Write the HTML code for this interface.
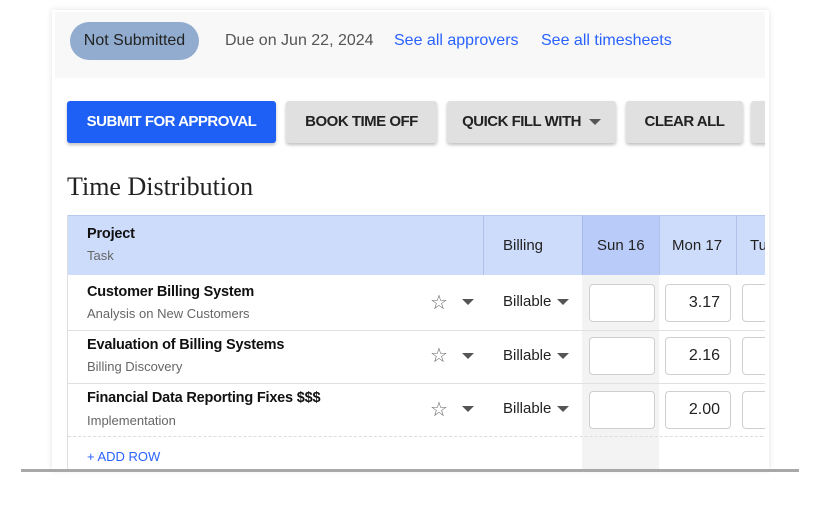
<!DOCTYPE html>
<html><head><style>
*{box-sizing:border-box;margin:0;padding:0}
body{width:818px;height:517px;background:#fff;font-family:"Liberation Sans",Arial,sans-serif;position:relative;overflow:hidden}
.card{position:absolute;left:52px;top:10px;width:717px;height:460px;background:#fff;box-shadow:0 0 6px rgba(0,0,0,.12);overflow:hidden}
.band{position:absolute;left:3px;top:2px;width:710px;height:66px;background:#f8f8f8}
.pill{position:absolute;left:15px;top:10px;width:129px;height:38px;border-radius:19px;background:#91acce;color:#222;font-size:16px;line-height:38px;text-align:center}
.t{position:absolute;font-size:16px;top:20px}
.btn{position:absolute;top:91px;height:42px;border-radius:3px;background:#e0e0e0;box-shadow:0 2px 3px rgba(0,0,0,.25);font-size:15px;font-weight:bold;letter-spacing:-0.5px;color:#222;line-height:42px;text-align:center}
h2{position:absolute;left:15px;top:162px;font-family:"Liberation Serif",serif;font-weight:normal;font-size:26px;color:#222}
.abs{position:absolute}
.hdr{position:absolute;top:205px;height:60px;background:#cddcfb;border-top:1px solid #b9c9ee}
.cell{position:absolute;font-size:15px;color:#222}
.row{position:absolute;left:16px;width:700px;height:1px;background:#e0e0e0}
.inp{position:absolute;width:66px;height:38px;border:1px solid #cfcfcf;border-radius:4px;background:#fff;font-size:16px;text-align:right;padding-right:10px;line-height:36px;color:#222}
.b{font-weight:bold;font-size:14.5px;color:#111;letter-spacing:-0.2px}
.s{font-size:13px;color:#666}
.car{display:inline-block;width:0;height:0;border-left:6px solid transparent;border-right:6px solid transparent;border-top:6px solid #555;vertical-align:middle;margin-left:6px}
.car2{position:absolute;width:0;height:0;border-left:6px solid transparent;border-right:6px solid transparent;border-top:6px solid #555}
</style></head><body>
<div class="card">
 <div class="band">
  <div class="pill">Not Submitted</div>
  <div class="t" style="left:170px;color:#555">Due on Jun 22, 2024</div>
  <div class="t" style="left:339px;color:#2962ff">See all approvers</div>
  <div class="t" style="left:486px;color:#2962ff">See all timesheets</div>
 </div>
 <div class="btn" style="left:15px;width:209px;background:#1e5ff5;color:#fff">SUBMIT FOR APPROVAL</div>
 <div class="btn" style="left:234px;width:151px">BOOK TIME OFF</div>
 <div class="btn" style="left:395px;width:169px">QUICK FILL WITH<span class="car" style="margin-left:8px"></span></div>
 <div class="btn" style="left:574px;width:117px">CLEAR ALL</div>
 <div class="btn" style="left:699px;width:40px"></div>
 <h2>Time Distribution</h2>
 <div class="hdr" style="left:15px;width:416px;border-left:1px solid #b9c9ee"></div>
 <div class="hdr" style="left:431px;width:99px;border-left:1px solid #b0c2ec"></div>
 <div class="hdr" style="left:530px;width:77px;background:#b8cbf9;border-left:1px solid #a8bbe8"></div>
 <div class="hdr" style="left:607px;width:77px;border-left:1px solid #b0c2ec"></div>
 <div class="hdr" style="left:684px;width:40px;border-left:1px solid #b0c2ec"></div>
 <div class="abs" style="left:530px;top:265px;width:77px;height:200px;background:#f3f3f3"></div>
 <div class="abs" style="left:15px;top:205px;width:1px;height:260px;background:#ddd"></div>
 <div class="cell b" style="left:35px;top:216px">Project</div>
 <div class="cell s" style="left:35px;top:238px">Task</div>
 <div class="cell" style="left:451px;top:227px">Billing</div>
 <div class="cell" style="left:545px;top:227px">Sun 16</div>
 <div class="cell" style="left:620px;top:227px">Mon 17</div>
 <div class="cell" style="left:698px;top:227px">Tu</div>

 <div class="cell b" style="left:35px;top:274px">Customer Billing System</div>
 <div class="cell s" style="left:35px;top:296px">Analysis on New Customers</div>
 <div class="cell b" style="left:35px;top:327px">Evaluation of Billing Systems</div>
 <div class="cell s" style="left:35px;top:349px">Billing Discovery</div>
 <div class="cell b" style="left:35px;top:380px">Financial Data Reporting Fixes $$$</div>
 <div class="cell s" style="left:35px;top:403px">Implementation</div>

 <div class="row" style="top:320px"></div>
 <div class="row" style="top:373px"></div>
 <div class="abs" style="left:16px;top:426px;width:700px;border-top:1px dashed #ddd"></div>

 <div class="cell" style="left:378px;top:280px;font-size:20px;color:#666">☆</div>
 <div class="cell" style="left:378px;top:333px;font-size:20px;color:#666">☆</div>
 <div class="cell" style="left:378px;top:387px;font-size:20px;color:#666">☆</div>
 <div class="car2" style="left:410px;top:289px"></div>
 <div class="car2" style="left:410px;top:343px"></div>
 <div class="car2" style="left:410px;top:396px"></div>

 <div class="cell" style="left:451px;top:283px">Billable<span class="car"></span></div>
 <div class="cell" style="left:451px;top:337px">Billable<span class="car"></span></div>
 <div class="cell" style="left:451px;top:390px">Billable<span class="car"></span></div>

 <div class="inp" style="left:537px;top:274px"></div>
 <div class="inp" style="left:613px;top:274px">3.17</div>
 <div class="inp" style="left:690px;top:274px"></div>
 <div class="inp" style="left:537px;top:327px"></div>
 <div class="inp" style="left:613px;top:327px">2.16</div>
 <div class="inp" style="left:690px;top:327px"></div>
 <div class="inp" style="left:537px;top:381px"></div>
 <div class="inp" style="left:613px;top:381px">2.00</div>
 <div class="inp" style="left:690px;top:381px"></div>

 <div class="cell" style="left:35px;top:439px;font-size:13px;color:#2962ff">+ ADD ROW</div>
 <div class="abs" style="left:713px;top:0;width:4px;height:460px;background:#fff"></div>
</div>
<div class="abs" style="left:21px;top:469px;width:778px;height:3px;background:#a8a8a8"></div>
</body></html>
